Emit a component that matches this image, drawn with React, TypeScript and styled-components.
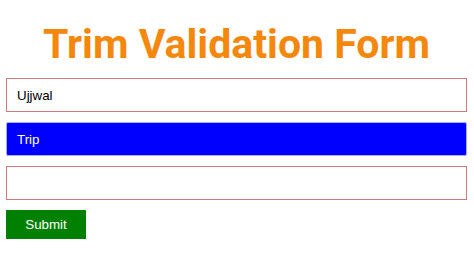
import React from "react";
import styled, { createGlobalStyle } from "styled-components";

const Global = createGlobalStyle`
  html, body { margin: 0; padding: 0; background: #ffffff; }
  body { font-family: "Liberation Sans", Arial, sans-serif; }
`;

const Page = styled.div`
  padding: 19px 7px 0 6px;
  display: flex;
  flex-direction: column;
`;

const Title = styled.h1`
  margin: 0 0 8px 0;
  font-family: Roboto, "Noto Sans", sans-serif;
  font-weight: 700;
  font-size: 41px;
  line-height: 51px;
  color: #f5880c;
  text-align: center;
`;

const Form = styled.form`
  display: flex;
  flex-direction: column;
  gap: 10px;
  align-items: stretch;
`;

const Field = styled.input<{ $active?: boolean }>`
  box-sizing: border-box;
  height: 34px;
  width: 100%;
  margin: 0;
  padding: 0 10px;
  font-family: "Liberation Sans", Arial, sans-serif;
  font-size: 13.3333px;
  outline: none;
  border-radius: ${(p) => (p.$active ? "2px" : "0")};
  border: 1.5px solid ${(p) => (p.$active ? "#a9a9ff" : "#d07a7e")};
  background: ${(p) => (p.$active ? "#0000ff" : "#ffffff")};
  color: ${(p) => (p.$active ? "#ffffff" : "#000000")};
`;

const Submit = styled.button`
  align-self: flex-start;
  box-sizing: border-box;
  width: 80px;
  height: 29px;
  margin: 0;
  border: none;
  background: #008000;
  color: #ffffff;
  font-family: "Liberation Sans", Arial, sans-serif;
  font-size: 13.3333px;
  cursor: pointer;
`;

export default function App() {
  return (
    <>
      <Global />
      <Page>
        <Title>Trim Validation Form</Title>
        <Form onSubmit={(e) => e.preventDefault()}>
          <Field defaultValue="Ujjwal" />
          <Field $active defaultValue="Trip" />
          <Field defaultValue="" />
          <Submit type="submit">Submit</Submit>
        </Form>
      </Page>
    </>
  );
}
